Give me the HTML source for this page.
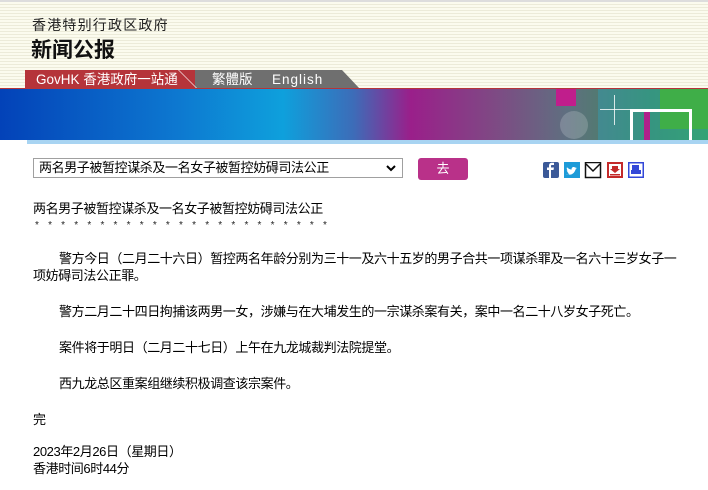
<!DOCTYPE html>
<html><head><meta charset="utf-8">
<style>
*{margin:0;padding:0;box-sizing:border-box}
body{width:708px;height:490px;overflow:hidden;background:#fff;font-family:"Liberation Sans","Noto Sans CJK SC",sans-serif;font-size:13px;color:#000;position:relative}
.hdr{position:absolute;left:0;top:0;width:708px;height:89px;background:repeating-linear-gradient(to bottom,#fbfbee 0,#fbfbee 2px,#ecebd9 2px,#ecebd9 3px);border-top:2px solid #ddd}
.t1{position:absolute;left:32px;top:15px;font-size:14px;letter-spacing:1.2px;color:#222}
.t2{position:absolute;left:31px;top:34px;font-size:21px;font-weight:bold;color:#111}
.tabr{position:absolute;left:25px;top:70px;width:170px;height:19px;background:#b5343a;color:#fff;font-size:13.5px;line-height:19px;padding-left:11px;clip-path:polygon(0 0,176px 0,195px 19px,0 19px)}
.tabg{position:absolute;left:178px;top:70px;width:182px;height:19px;background:#6f6f6f;color:#fff;font-size:13.5px;line-height:19px;clip-path:polygon(0 0,164px 0,182px 19px,18px 19px)}
.redline{position:absolute;left:0;top:88px;width:708px;height:1px;background:#b5343a}
.ban{position:absolute;left:0;top:89px;width:708px;height:51px;overflow:hidden;background:linear-gradient(to right,#0342b8 0%,#0d78d0 25%,#0ea0dc 40%,#3d6cb8 50%,#9a1f8a 58%,#7e4a84 70%,#5f6f80 80%,#3e8a5a 92%,#3aa04a 100%)}
.strip{position:absolute;left:27px;top:140px;width:681px;height:4px;background:#a8d4f2}
.tx{letter-spacing:-0.4px}
</style></head><body>
<div class="hdr"></div>
<div class="t1">香港特别行政区政府</div>
<div class="t2">新闻公报</div>
<div class="tabg"><span style="position:absolute;left:34px">繁體版</span><span style="position:absolute;left:94px;letter-spacing:1px">English</span></div>
<div class="tabr">GovHK 香港政府一站通</div>
<div style="position:absolute;left:178px;top:70px;width:20px;height:19px;background:linear-gradient(45deg,transparent 48%,#fff 50%,transparent 52%)"></div>
<div class="redline"></div>
<div class="ban">
 <div style="position:absolute;left:556px;top:0;width:20px;height:17px;background:#c01e8c"></div>
 <div style="position:absolute;left:598px;top:0;width:110px;height:51px;background:rgba(40,170,200,.35)"></div>
 <div style="position:absolute;left:660px;top:0;width:48px;height:40px;background:#3fae48"></div>
 <div style="position:absolute;left:560px;top:22px;width:28px;height:28px;border-radius:50%;background:rgba(255,255,255,.18)"></div>
 <div style="position:absolute;left:600px;top:20px;width:30px;height:1px;background:rgba(255,255,255,.8)"></div>
 <div style="position:absolute;left:614px;top:6px;width:1px;height:30px;background:rgba(255,255,255,.8)"></div>
</div>
<div style="position:absolute;left:630px;top:109px;width:62px;height:31px;border:3px solid #fff;border-bottom:none"></div>
<div style="position:absolute;left:644px;top:112px;width:6px;height:28px;background:#b0208a"></div>
<div class="strip"></div>

<div class="tx" style="position:absolute;left:33px;top:158px;width:370px;height:20px;border:1px solid #a0a0a0;font-size:13px;line-height:18px;padding-left:5px">两名男子被暂控谋杀及一名女子被暂控妨碍司法公正
<svg style="position:absolute;right:6px;top:6px" width="10" height="7" viewBox="0 0 10 7"><path d="M1 1L5 5L9 1" stroke="#000" stroke-width="2" fill="none"/></svg></div>
<div style="position:absolute;left:418px;top:158px;width:50px;height:22px;background:#b93189;border-radius:3px;color:#fff;text-align:center;line-height:22px;font-size:13px">去</div>

<svg style="position:absolute;left:543px;top:162px" width="102" height="18" viewBox="0 0 102 18">
<rect x="0" y="0" width="16" height="16" rx="2" fill="#3b5998"/><path d="M8 16V8h2.5l.5-2.5H8V4c0-.8.3-1 1-1h2V.8H9C6.8.8 6 2 6 4v1.5H4V8h2v8z" fill="#fff"/>
<rect x="21" y="0" width="16" height="16" fill="#1d9bd8"/><path d="M23 12c3 1.5 8 1 9.5-4.5.5-.3 1-.8 1.3-1.3l-1.2.3.9-1.2-1.3.4c-1.5-1.5-4-.3-3.5 1.8-2-.1-3.5-1-4.7-2.3-.6 1.2-.2 2.5.8 3.2l-1-.2c0 1 .8 2 1.8 2.2h-1c.3 1 1.2 1.5 2 1.6-1 .8-2.5 1-3.6 0z" fill="#fff"/>
<rect x="42.5" y="0.5" width="15" height="15" fill="#fff" stroke="#111" stroke-width="1.5"/><path d="M43 2L50 9L57 2" stroke="#111" stroke-width="1.5" fill="none"/>
<rect x="64" y="0" width="16" height="16" fill="#c42a2a"/><rect x="66" y="2" width="12" height="12" fill="#fff"/><path d="M69 4h6v3h2l-5 4-5-4h2z" fill="#c42a2a"/><rect x="67" y="12" width="10" height="1.5" fill="#c42a2a"/>
<rect x="85" y="0" width="16" height="16" fill="#3348d8"/><rect x="86.5" y="1.5" width="13" height="13" fill="#fff"/><rect x="89" y="3" width="7" height="5" fill="#3348d8"/><rect x="88" y="8" width="10" height="4" fill="#3348d8"/>
</svg>

<div class="tx" style="position:absolute;left:33px;top:200px;line-height:17px;width:660px">
<div>两名男子被暂控谋杀及一名女子被暂控妨碍司法公正</div>
<div style="letter-spacing:9.2px;font-size:10px;padding-left:2px;color:#222">***********************</div>
</div>
<div class="tx" style="position:absolute;left:33px;top:250px;width:648px;line-height:17px">
<p style="text-indent:26px">警方今日（二月二十六日）暂控两名年龄分别为三十一及六十五岁的男子合共一项谋杀罪及一名六十三岁女子一项妨碍司法公正罪。</p>
<p style="text-indent:26px;margin-top:19px">警方二月二十四日拘捕该两男一女，涉嫌与在大埔发生的一宗谋杀案有关，案中一名二十八岁女子死亡。</p>
<p style="text-indent:26px;margin-top:19px">案件将于明日（二月二十七日）上午在九龙城裁判法院提堂。</p>
<p style="text-indent:26px;margin-top:19px">西九龙总区重案组继续积极调查该宗案件。</p>
<p style="margin-top:19px">完</p>
<p style="margin-top:15px">2023年2月26日（星期日）<br>香港时间6时44分</p>
</div>
</body></html>
